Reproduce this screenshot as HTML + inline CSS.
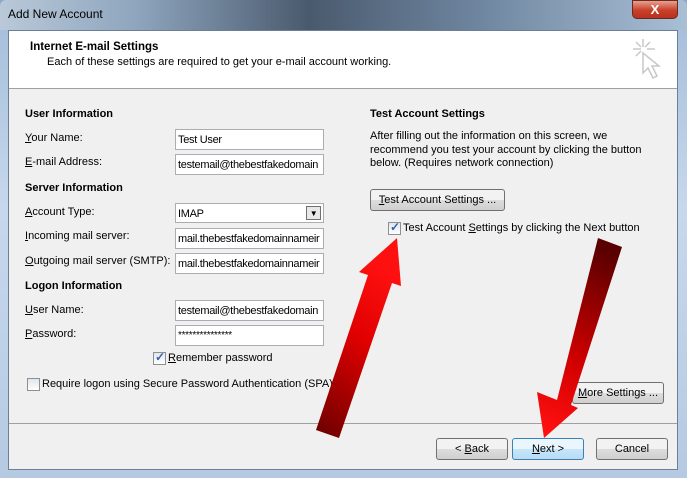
<!DOCTYPE html>
<html><head><meta charset="utf-8"><style>
*{margin:0;padding:0;box-sizing:border-box}
body{width:687px;height:478px;overflow:hidden;font-family:"Liberation Sans",sans-serif;font-size:11px;color:#000;position:relative;background:#8aa8c8}
.frame{position:absolute;left:0;top:0;width:687px;height:478px;border-radius:6px 6px 0 0;background:linear-gradient(90deg,#b9c9d9 0%,#8ea5bd 20%,#4a5a6e 45%,#6f86a0 70%,#a9bfd6 100%)}
.title{position:absolute;left:8px;top:7px;font-size:12px;color:#000}
.close{position:absolute;left:632px;top:0;width:46px;height:19px;border-radius:0 0 5px 5px;background:linear-gradient(#e8a090,#c8402a 55%,#b83220);border:1px solid #6a2a20;color:#fff;font-weight:bold;text-align:center;font-size:13px;line-height:17px}
.side{position:absolute;left:0;top:30px;width:687px;height:448px;background:linear-gradient(180deg,#a8c0dc,#c6d8ec 40%,#b5cae2)}
.client{position:absolute;left:8px;top:30px;width:670px;height:440px;background:#f0f0f0;border:1px solid #6d7f96}
.head{position:absolute;left:0;top:0;width:668px;height:58px;background:#fff;border-bottom:1px solid #a0a0a0}
.abs{position:absolute;white-space:nowrap}
.b{font-weight:bold}
.inp{position:absolute;left:166px;width:149px;height:21px;background:#fff;border:1px solid #abadb3;padding:4px 2px;overflow:hidden;white-space:nowrap;font-size:11px;letter-spacing:-0.3px}
.btn{position:absolute;height:22px;border:1px solid #707070;border-radius:3px;background:linear-gradient(#f2f2f2 50%,#dddddd 50%,#cfcfcf);text-align:center;line-height:20px}
.cb{position:absolute;width:13px;height:13px;border:1px solid #8f8f8f;background:linear-gradient(#dfe6ee,#fff)}
.cb.c::after{content:"✓";position:absolute;left:1px;top:-3px;font-size:12px;font-weight:bold;color:#3a5ea8}
u{text-decoration:underline}
</style></head><body>
<div class="frame"></div>
<div class="side"></div>
<div class="title">Add New Account</div>
<div class="close">X</div>
<div class="client">
 <div class="head">
  <div class="abs b" style="left:21px;top:10px;font-size:11.5px">Internet E-mail Settings</div>
  <div class="abs" style="left:38px;top:25px">Each of these settings are required to get your e-mail account working.</div>
  <svg class="abs" style="left:620px;top:6px" width="40" height="48" viewBox="0 0 40 48"><g stroke="#c8c8c8" stroke-width="1.5" fill="none"><path d="M14 2v8M4 12h8M18 12h8M7 5l5 5M21 5l-5 5M7 19l5-5"/><path d="M14 16l0 20 5-5 5 10 4-2-5-10 7 0z" fill="#fff"/></g></svg>
 </div>
 <div class="abs b" style="left:16px;top:77px">User Information</div>
 <div class="abs" style="left:16px;top:101px"><u>Y</u>our Name:</div>
 <div class="inp" style="top:98px">Test User</div>
 <div class="abs" style="left:16px;top:125px"><u>E</u>-mail Address:</div>
 <div class="inp" style="top:123px">testemail@thebestfakedomain</div>
 <div class="abs b" style="left:16px;top:151px">Server Information</div>
 <div class="abs" style="left:16px;top:175px"><u>A</u>ccount Type:</div>
 <div class="inp" style="top:172px;height:20px">IMAP<span style="position:absolute;right:2px;top:2px;width:15px;height:14px;border:1px solid #707070;background:#e8e8e8;font-size:8px;text-align:center;line-height:13px">▼</span></div>
 <div class="abs" style="left:16px;top:199px"><u>I</u>ncoming mail server:</div>
 <div class="inp" style="top:197px">mail.thebestfakedomainnameir</div>
 <div class="abs" style="left:16px;top:224px"><u>O</u>utgoing mail server (SMTP):</div>
 <div class="inp" style="top:222px">mail.thebestfakedomainnameir</div>
 <div class="abs b" style="left:16px;top:249px">Logon Information</div>
 <div class="abs" style="left:16px;top:273px"><u>U</u>ser Name:</div>
 <div class="inp" style="top:269px">testemail@thebestfakedomain</div>
 <div class="abs" style="left:16px;top:297px"><u>P</u>assword:</div>
 <div class="inp" style="top:294px;font-size:10px">***************</div>
 <div class="cb c" style="left:144px;top:321px"></div>
 <div class="abs" style="left:159px;top:321px"><u>R</u>emember password</div>
 <div class="cb" style="left:18px;top:347px"></div>
 <div class="abs" style="left:33px;top:347px">Require logon using Secure Password Authentication (SPA)</div>

 <div class="abs b" style="left:361px;top:77px">Test Account Settings</div>
 <div class="abs" style="left:361px;top:99px;line-height:13.5px">After filling out the information on this screen, we<br>recommend you test your account by clicking the button<br>below. (Requires network connection)</div>
 <div class="btn" style="left:361px;top:158px;width:135px"><u>T</u>est Account Settings ...</div>
 <div class="cb c" style="left:379px;top:191px"></div>
 <div class="abs" style="left:394px;top:191px">Test Account <u>S</u>ettings by clicking the Next button</div>
 <div class="btn" style="left:563px;top:351px;width:92px"><u>M</u>ore Settings ...</div>
 <div style="position:absolute;left:0;top:392px;width:668px;border-top:1px solid #a0a0a0"></div>
 <div class="btn" style="left:427px;top:407px;width:72px">&lt; <u>B</u>ack</div>
 <div class="btn" style="left:503px;top:407px;width:72px;border-color:#3c7fb1;background:linear-gradient(#eaf6fd 50%,#c6e6fa 50%,#b8dcf4)"><u>N</u>ext &gt;</div>
 <div class="btn" style="left:587px;top:407px;width:72px">Cancel</div>
</div>
<svg style="position:absolute;left:0;top:0" width="687" height="478">
<defs>
<linearGradient id="g1" x1="0" y1="1" x2="0.3" y2="0"><stop offset="0" stop-color="#6a0000"/><stop offset="0.6" stop-color="#e00000"/><stop offset="1" stop-color="#ff1010"/></linearGradient>
<linearGradient id="g2" x1="0.5" y1="0" x2="0.3" y2="1"><stop offset="0" stop-color="#5a0000"/><stop offset="0.6" stop-color="#d00000"/><stop offset="1" stop-color="#ff1010"/></linearGradient>
</defs>
<polygon fill="url(#g1)" points="316,430 339,438 392,283 401,286 397,238 359,272 368,275"/>
<polygon fill="url(#g2)" points="598,238 622,247 571,405 578,408 544,438 537,392 557,400"/>
</svg>
</body></html>
